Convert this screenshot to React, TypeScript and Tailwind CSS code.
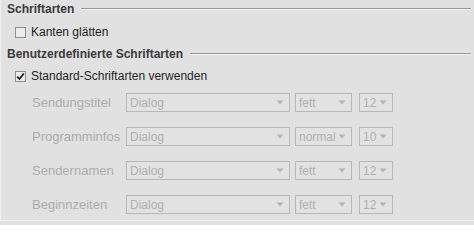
import React from "react";

const font = { fontFamily: '"Liberation Sans", Arial, sans-serif' };

interface FontRow {
  label: string;
  family: string;
  style: string;
  size: string;
}

const rows: FontRow[] = [
  { label: "Sendungstitel", family: "Dialog", style: "fett", size: "12" },
  { label: "Programminfos", family: "Dialog", style: "normal", size: "10" },
  { label: "Sendernamen", family: "Dialog", style: "fett", size: "12" },
  { label: "Beginnzeiten", family: "Dialog", style: "fett", size: "12" },
];

const Arrow = () => (
  <svg width="8" height="5" viewBox="0 0 8 5" className="shrink-0">
    <path d="M0.5 0.5 L7.5 0.5 L4 4.5 Z" fill="#b4b4b4" />
  </svg>
);

const Combo = ({ value, width }: { value: string; width: string }) => (
  <div
    className={`flex h-[19px] items-center justify-between border border-[#b8b8b8] bg-[#e2e2e2] pl-[3px] pr-[5px] text-[12px] text-[#b0b0b0] ${width}`}
  >
    <span className="leading-none">{value}</span>
    <Arrow />
  </div>
);

const Header = ({ title }: { title: string }) => (
  <div className="flex items-center gap-[7px] pl-[6px]">
    <span className="text-[12px] font-bold leading-none text-[#3a3a3a]">{title}</span>
    <div className="h-[2px] flex-1 border-t border-[#9a9a9a] bg-[#f4f4f4]" />
  </div>
);

const Check = ({ checked }: { checked?: boolean }) => (
  <div className="flex h-[11px] w-[11px] items-center justify-center border border-[#8e8e8e] bg-[#ececec]">
    {checked && (
      <svg width="9" height="9" viewBox="0 0 9 9">
        <path d="M1.2 4.6 L3.5 7 L7.8 1.5" fill="none" stroke="#1a1a1a" strokeWidth="1.8" />
      </svg>
    )}
  </div>
);

export default function App() {
  return (
    <div className="h-[225px] w-[474px] overflow-hidden bg-[#e1e1e1]" style={font}>
      <div className="flex h-[221px] flex-col border-b border-l border-[#eeeeee] pr-[3px] pt-[3px]">
        <Header title="Schriftarten" />
        <div className="mt-[11px] flex items-center gap-[5px] pl-[14px]">
          <Check />
          <span className="text-[12px] leading-none text-[#1e1e1e]">Kanten glätten</span>
        </div>
        <div className="mt-[10px]">
          <Header title="Benutzerdefinierte Schriftarten" />
        </div>
        <div className="mt-[10px] flex items-center gap-[5px] pl-[14px]">
          <Check checked />
          <span className="text-[12px] leading-none text-[#1e1e1e]">Standard-Schriftarten verwenden</span>
        </div>
        <div className="mt-[11px] flex flex-col gap-[15px] pl-[31px]">
          {rows.map((r) => (
            <div key={r.label} className="flex items-center">
              <span className="w-[94px] text-[13px] leading-none text-[#acacac]">{r.label}</span>
              <Combo value={r.family} width="w-[164px]" />
              <div className="w-[5px]" />
              <Combo value={r.style} width="w-[57px]" />
              <div className="w-[7px]" />
              <Combo value={r.size} width="w-[34px]" />
            </div>
          ))}
        </div>
      </div>
    </div>
  );
}
